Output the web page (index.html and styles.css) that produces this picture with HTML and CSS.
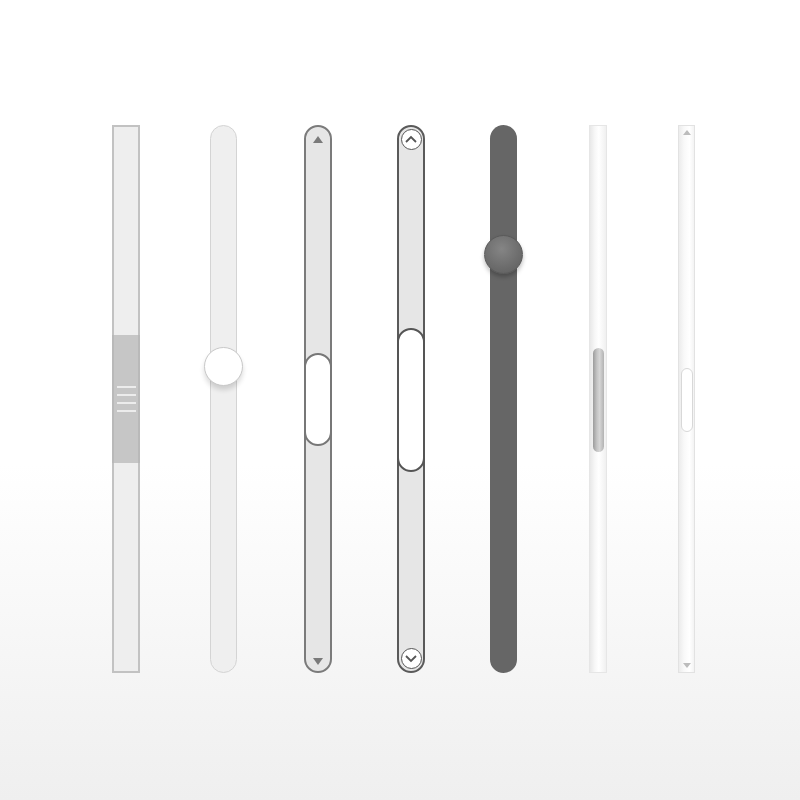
FILE: index.html
```html
<!DOCTYPE html>
<html lang="en">
<head>
    <meta charset="UTF-8">
    <meta name="viewport" content="width=device-width, initial-scale=1.0">
    <title>Scrollbar Styles</title>
    <link rel="stylesheet" href="styles.css">
</head>
<body>
    <div class="scrollbars">
        <!-- flat track with grip thumb -->
        <div class="bar bar--flat">
            <div class="thumb">
                <span class="grip"></span>
                <span class="grip"></span>
                <span class="grip"></span>
                <span class="grip"></span>
            </div>
        </div>

        <!-- pill track with round knob -->
        <div class="bar bar--knob">
            <div class="knob"></div>
        </div>

        <!-- track with triangle arrows -->
        <div class="bar bar--arrows">
            <span class="arrow arrow--up"></span>
            <div class="thumb"></div>
            <span class="arrow arrow--down"></span>
        </div>

        <!-- track with circle buttons -->
        <div class="bar bar--circle">
            <span class="circle-btn">
                <svg width="12" height="8" viewBox="0 0 12 8"><path d="M1 7 L6 2 L11 7" fill="none" stroke="#555" stroke-width="1.8"/></svg>
            </span>
            <div class="thumb"></div>
            <span class="circle-btn circle-btn--down">
                <svg width="12" height="8" viewBox="0 0 12 8"><path d="M1 1 L6 6 L11 1" fill="none" stroke="#555" stroke-width="1.8"/></svg>
            </span>
        </div>

        <!-- dark track -->
        <div class="bar bar--dark">
            <div class="knob"></div>
        </div>

        <!-- slim mac style -->
        <div class="bar bar--mac">
            <div class="thumb"></div>
        </div>

        <!-- slim light with tiny arrows -->
        <div class="bar bar--thin">
            <span class="arrow arrow--up"></span>
            <div class="thumb"></div>
            <span class="arrow arrow--down"></span>
        </div>
    </div>
</body>
</html>
```

FILE: styles.css
```css
html, body {
    height: 100%;
}
body {
    margin: 0;
    background: linear-gradient(to bottom, #ffffff 0%, #ffffff 58%, #efefef 100%);
    font-family: Arial, sans-serif;
}
.scrollbars {
    display: flex;
    align-items: flex-start;
    padding: 125px 0 0 112px;
}
.bar {
    box-sizing: border-box;
    height: 548px;
    display: flex;
    flex-direction: column;
    align-items: center;
    flex-shrink: 0;
}

/* 1 - flat */
.bar--flat {
    width: 28px;
    background-color: #eeeeee;
    border: 2px solid #c2c2c2;
}
.bar--flat .thumb {
    box-sizing: border-box;
    width: calc(100% + 4px);
    height: 128px;
    margin-top: 208px;
    background-color: #c6c6c6;
    border-left: 2px solid #b9b9b9;
    border-right: 2px solid #b9b9b9;
    display: flex;
    flex-direction: column;
    align-items: center;
    justify-content: center;
    gap: 6px;
}
.grip {
    width: 19px;
    height: 2px;
    background-color: #ececec;
}

/* 2 - knob */
.bar--knob {
    width: 27px;
    margin-left: 70px;
    background-color: #efefef;
    border: 1px solid #d4d4d4;
    border-radius: 14px;
}
.bar--knob .knob {
    box-sizing: border-box;
    flex-shrink: 0;
    width: 39px;
    height: 39px;
    margin-top: 221px;
    border-radius: 50%;
    background-color: #ffffff;
    border: 1px solid #c8c8c8;
    box-shadow: 0 4px 5px rgba(0, 0, 0, 0.14);
}

/* 3 - arrows */
.bar--arrows {
    width: 28px;
    margin-left: 67px;
    background-color: #e6e6e6;
    border: 2px solid #7b7b7b;
    border-radius: 14px;
}
.bar--arrows .arrow--up {
    margin-top: 9px;
    border-left: 5px solid transparent;
    border-right: 5px solid transparent;
    border-bottom: 7px solid #7a7a7a;
}
.bar--arrows .arrow--down {
    margin-top: auto;
    margin-bottom: 6px;
    border-left: 5px solid transparent;
    border-right: 5px solid transparent;
    border-top: 7px solid #7a7a7a;
}
.bar--arrows .thumb {
    box-sizing: border-box;
    flex-shrink: 0;
    width: calc(100% + 4px);
    height: 93px;
    margin-top: 210px;
    background-color: #ffffff;
    border: 2px solid #777777;
    border-radius: 14px;
}

/* 4 - circle buttons */
.bar--circle {
    width: 28px;
    margin-left: 65px;
    background-color: #e6e6e6;
    border: 2px solid #5a5a5a;
    border-radius: 14px;
}
.circle-btn {
    box-sizing: border-box;
    flex-shrink: 0;
    width: 21px;
    height: 21px;
    margin-top: 2px;
    border-radius: 50%;
    border: 1.5px solid #555555;
    background-color: #ffffff;
    display: flex;
    align-items: center;
    justify-content: center;
}
.circle-btn svg {
    margin-top: -1px;
}
.circle-btn--down {
    margin-top: auto;
    margin-bottom: 2px;
}
.circle-btn--down svg {
    margin-top: 1px;
}
.bar--circle .thumb {
    box-sizing: border-box;
    flex-shrink: 0;
    width: calc(100% + 4px);
    height: 144px;
    margin-top: 178px;
    background-color: #ffffff;
    border: 2px solid #555555;
    border-radius: 14px;
}

/* 5 - dark */
.bar--dark {
    width: 27px;
    margin-left: 65px;
    background-color: #666666;
    border-radius: 14px;
}
.bar--dark .knob {
    box-sizing: border-box;
    flex-shrink: 0;
    width: 39px;
    height: 39px;
    margin-top: 110px;
    border-radius: 50%;
    background: radial-gradient(circle at 45% 35%, #858585 0%, #6e6e6e 55%, #5c5c5c 100%);
    border: 1px solid #5a5a5a;
    box-shadow: 0 3px 4px rgba(0, 0, 0, 0.25);
}

/* 6 - mac */
.bar--mac {
    width: 18px;
    margin-left: 72px;
    border: 1px solid #e6e6e6;
    background: linear-gradient(to right, #e8e8e8 0%, #f7f7f7 30%, #ffffff 55%, #f0f0f0 100%);
}
.bar--mac .thumb {
    width: 11px;
    height: 104px;
    margin-top: 222px;
    border-radius: 6px;
    background: linear-gradient(to right, #9c9c9c 0%, #c4c4c4 35%, #d6d6d6 60%, #b2b2b2 100%);
}

/* 7 - thin */
.bar--thin {
    width: 17px;
    margin-left: 71px;
    border: 1px solid #e2e2e2;
    background: linear-gradient(to right, #ececec 0%, #f9f9f9 35%, #ffffff 70%, #f3f3f3 100%);
}
.bar--thin .arrow--up {
    margin-top: 4px;
    border-left: 4px solid transparent;
    border-right: 4px solid transparent;
    border-bottom: 5px solid #bcbcbc;
}
.bar--thin .arrow--down {
    margin-top: auto;
    margin-bottom: 4px;
    border-left: 4px solid transparent;
    border-right: 4px solid transparent;
    border-top: 5px solid #bcbcbc;
}
.bar--thin .thumb {
    box-sizing: border-box;
    width: 12px;
    height: 64px;
    margin-top: 233px;
    border-radius: 6px;
    background-color: #ffffff;
    border: 1px solid #d8d8d8;
}
```
